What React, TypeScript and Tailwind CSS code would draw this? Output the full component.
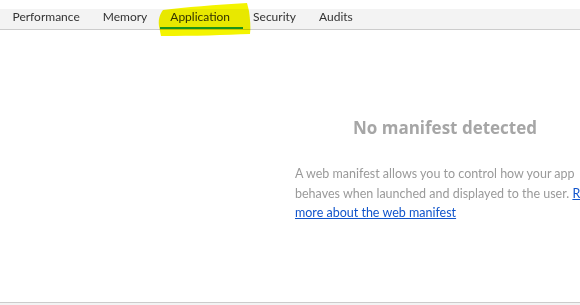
export default function App() {
  const tabs = ["Performance", "Memory", "Application", "Security", "Audits"];
  return (
    <div className="relative w-[580px] h-[305px] overflow-hidden bg-white flex flex-col" style={{ fontFamily: 'Lato, "Segoe UI", sans-serif' }}>
      <div className="h-[9px] bg-white" />
      {/* tab strip */}
      <div className="h-[21px] bg-[#f3f3f3] border-b border-[#cccccc] flex items-stretch pl-[1px]">
        {tabs.map((t) => (
          <div key={t} className="relative px-[11.5px] text-[12px] leading-[16px] text-[#333333]">
            {t}
          </div>
        ))}
      </div>

      {/* marker scribble */}
      <svg className="absolute left-[155px] top-[1px] pointer-events-none mix-blend-multiply" width="100" height="38" viewBox="0 0 100 38">
        <path
          d="M8 9 C 30 6, 60 4, 92 2 L 94 10 C 95 18, 96 26, 95 33 C 70 34, 40 35, 6 35 L 4 25 C 3 18, 5 13, 8 9 Z"
          fill="#f4f400"
        />
        <line x1="5" y1="27" x2="88" y2="27" stroke="#1a9b1a" strokeWidth="2" />
      </svg>

      {/* main */}
      <div className="flex-1 flex">
        <div className="ml-[295px] w-[312px] shrink-0 pt-[87px]">
          <div
            className="w-[300px] text-center text-[17px] font-bold text-[#a6a6a6] leading-[22px]"
            style={{ fontFamily: '"Open Sans", sans-serif' }}
          >
            No manifest detected
          </div>
          <p className="mt-[25px] text-[12.5px] leading-[19.5px] text-[#9a9a9a]">
            A web manifest allows you to control how your app behaves when launched and displayed to the user.{" "}
            <a className="text-[#1155cc] underline">Read more about the web manifest</a>
          </p>
        </div>
      </div>

      <div className="h-[3px] bg-[#f3f3f3] border-t border-[#cccccc]" />
    </div>
  );
}
